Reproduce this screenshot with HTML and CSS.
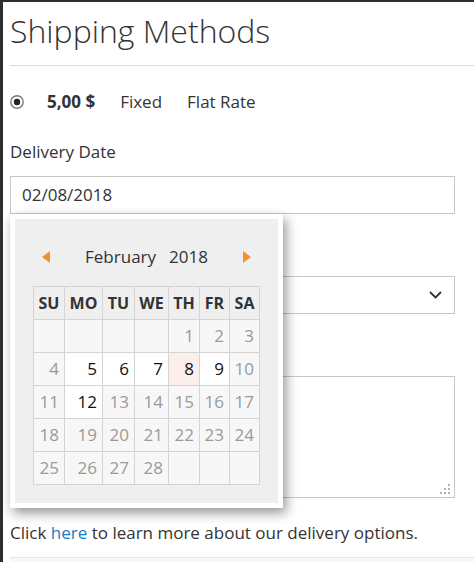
FILE: index.html
```html
<!DOCTYPE html>
<html lang="en">
<head>
<meta charset="utf-8">
<title>Shipping Methods</title>
<link rel="stylesheet" href="styles.css">
</head>
<body>
<div class="frame">
  <div class="page">
    <h1 class="title">Shipping Methods</h1>

    <div class="method">
      <span class="radio">
        <svg width="14" height="14" viewBox="0 0 14 14" aria-hidden="true">
          <circle cx="7" cy="7" r="6.2" fill="#fff" stroke="#7a7a7a" stroke-width="1.4"/>
          <circle cx="7" cy="7" r="3.2" fill="#222"/>
        </svg>
      </span>
      <span class="price">5,00 $</span>
      <span class="code">Fixed</span>
      <span class="carrier">Flat Rate</span>
    </div>

    <div class="field">
      <label class="label">Delivery Date</label>
      <div class="date-wrap">
        <div class="control input">02/08/2018</div>
        <div class="datepicker">
          <div class="dp-header">
            <span class="dp-prev"></span>
            <span class="dp-title"><span class="dp-month">February</span><span class="dp-year">2018</span></span>
            <span class="dp-next"></span>
          </div>
          <table class="dp-table">
            <colgroup>
              <col class="c31"><col class="c38"><col class="c32"><col class="c34"><col class="c31"><col class="c30"><col class="c30">
            </colgroup>
            <thead>
              <tr><th>SU</th><th>MO</th><th>TU</th><th>WE</th><th>TH</th><th>FR</th><th>SA</th></tr>
            </thead>
            <tbody>
              <tr><td class="off"></td><td class="off"></td><td class="off"></td><td class="off"></td><td class="off">1</td><td class="off">2</td><td class="off">3</td></tr>
              <tr><td class="off">4</td><td class="on">5</td><td class="on">6</td><td class="on">7</td><td class="today">8</td><td class="on">9</td><td class="off">10</td></tr>
              <tr><td class="off">11</td><td class="on">12</td><td class="off">13</td><td class="off">14</td><td class="off">15</td><td class="off">16</td><td class="off">17</td></tr>
              <tr><td class="off">18</td><td class="off">19</td><td class="off">20</td><td class="off">21</td><td class="off">22</td><td class="off">23</td><td class="off">24</td></tr>
              <tr><td class="off">25</td><td class="off">26</td><td class="off">27</td><td class="off">28</td><td class="off"></td><td class="off"></td><td class="off"></td></tr>
            </tbody>
          </table>
        </div>
      </div>
    </div>

    <div class="field spaced">
      <div class="control select">
        <svg class="chevron" width="13" height="8" viewBox="0 0 13 8" aria-hidden="true">
          <polyline points="1,1 6.5,6.5 12,1" fill="none" stroke="#333" stroke-width="1.8"/>
        </svg>
      </div>
    </div>

    <div class="field spaced">
      <div class="control textarea">
        <svg class="grip" width="10" height="10" viewBox="0 0 10 10" aria-hidden="true">
          <circle cx="9" cy="1" r="1" fill="#9a9a9a"/>
          <circle cx="9" cy="5" r="1" fill="#9a9a9a"/>
          <circle cx="5" cy="5" r="1" fill="#9a9a9a"/>
          <circle cx="9" cy="9" r="1" fill="#9a9a9a"/>
          <circle cx="5" cy="9" r="1" fill="#9a9a9a"/>
          <circle cx="1" cy="9" r="1" fill="#9a9a9a"/>
        </svg>
      </div>
    </div>

    <p class="note">Click <a class="link" href="#">here</a> to learn more about our delivery options.</p>
    <div class="bottom-rule"></div>
  </div>
</div>
</body>
</html>
```
FILE: styles.css
```css
html, body {
  margin: 0;
  padding: 0;
  background: #fff;
}

body {
  font-family: "Open Sans", "DejaVu Sans", sans-serif;
  color: #333;
  font-size: 17px;
  line-height: 24px;
}

.frame {
  box-sizing: border-box;
  height: 562px;
  border-left: 3px solid #2e2e2e;
  border-top: 2px solid #2e2e2e;
  overflow: hidden;
}

.page {
  padding-left: 7px;
}

.title {
  margin: 0;
  padding: 9px 0 14px;
  font-weight: 300;
  font-size: 32px;
  line-height: 40px;
  color: #333;
  border-bottom: 1px solid #dcdcdc;
}

.method {
  display: flex;
  align-items: center;
  margin-top: 24px;
  height: 24px;
}

.radio {
  display: flex;
  width: 14px;
  height: 14px;
  margin-right: 23px;
}

.price {
  font-weight: 700;
  margin-right: 25px;
}

.code {
  margin-right: 25px;
}

.field {
  width: 445px;
}

.field.spaced {
  margin-top: 62px;
}

.label {
  display: block;
  margin-top: 26px;
  margin-bottom: 12px;
  line-height: 24px;
}

.date-wrap {
  position: relative;
}

.control {
  box-sizing: border-box;
  border: 1px solid #c6c6c6;
  background: #fff;
}

.input {
  height: 38px;
  line-height: 36px;
  padding: 0 11px;
}

.select {
  position: relative;
  height: 38px;
  display: flex;
  align-items: center;
  justify-content: flex-end;
  padding-right: 12px;
}

.textarea {
  position: relative;
  height: 122px;
}

.grip {
  position: absolute;
  right: 4px;
  bottom: 3px;
}

.note {
  margin: 23px 0 0;
  line-height: 24px;
}

.link {
  color: #1979c3;
  text-decoration: none;
}

.bottom-rule {
  margin-top: 12px;
  height: 6px;
  border-top: 1px solid #e6e6e6;
  background: #f7f7f7;
}

/* datepicker */
.datepicker {
  position: absolute;
  left: 0;
  top: 100%;
  z-index: 10;
  border: 5px solid #fff;
  background: #efefef;
  padding: 18px;
  box-shadow: 3px 5px 11px rgba(0, 0, 0, 0.42);
}

.dp-header {
  display: flex;
  align-items: center;
  justify-content: space-between;
  height: 40px;
  margin-bottom: 9px;
  padding: 0 9px;
}

.dp-prev {
  width: 0;
  height: 0;
  border-top: 6px solid transparent;
  border-bottom: 6px solid transparent;
  border-right: 8px solid #f4902f;
}

.dp-next {
  width: 0;
  height: 0;
  border-top: 6px solid transparent;
  border-bottom: 6px solid transparent;
  border-left: 8px solid #f4902f;
}

.dp-title {
  display: flex;
  gap: 13px;
  color: #333;
}

.dp-table {
  border-collapse: collapse;
  table-layout: fixed;
  width: 226px;
  font-size: 17px;
}

.c30 { width: 30px; }
.c31 { width: 31px; }
.c32 { width: 32px; }
.c34 { width: 34px; }
.c38 { width: 38px; }

.dp-table th,
.dp-table td {
  border: 1px solid #d4d4d4;
  line-height: 32px;
  height: 32px;
  padding: 0 5px 0 0;
  overflow: visible;
  white-space: nowrap;
}

.dp-table th {
  padding: 0;
  font-size: 16px;
  font-weight: 700;
  text-align: center;
  color: #333;
  background: #efefef;
}

.dp-table td {
  text-align: right;
}

.dp-table td.off {
  background: #f7f7f7;
  color: #9a9a9a;
}

.dp-table td.on {
  background: #fff;
  color: #111;
}

.dp-table td.today {
  background: #fcefeb;
  color: #111;
}
```
